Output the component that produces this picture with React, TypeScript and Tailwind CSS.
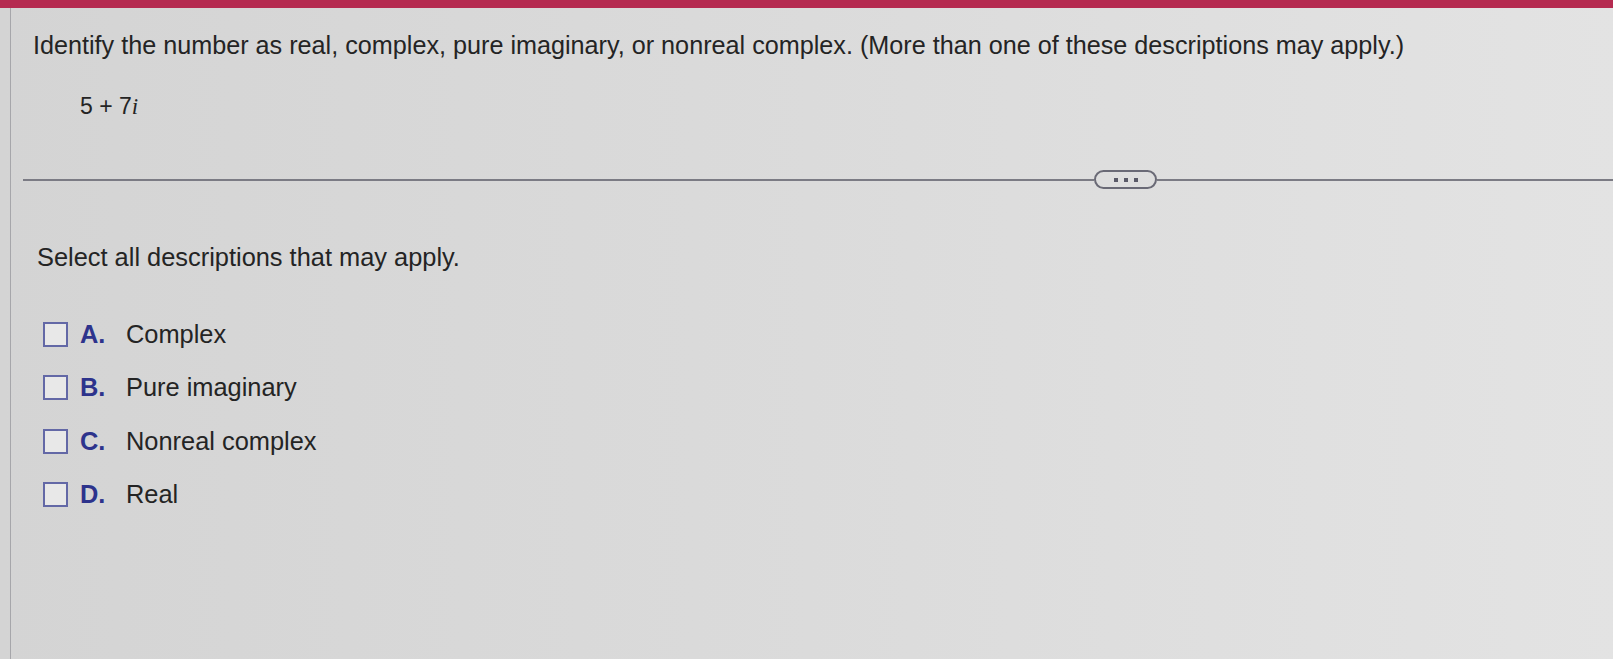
import React, { useState } from "react";

const options = [
  { key: "A", label: "Complex" },
  { key: "B", label: "Pure imaginary" },
  { key: "C", label: "Nonreal complex" },
  { key: "D", label: "Real" },
];

export default function App() {
  const [checked, setChecked] = useState<Record<string, boolean>>({});

  return (
    <div
      className="w-[1613px] h-[659px] overflow-hidden bg-linear-to-r from-[#d4d4d4] via-[#dbdbdb] to-[#e3e3e3] text-[#242424]"
      style={{ fontFamily: '"Liberation Sans", Arial, sans-serif' }}
    >
      <div className="h-[8px] bg-[#b52a50]" />
      <div className="h-[651px] ml-[10px] border-l border-[#a6a6aa]">
        <div className="pl-[22px] pt-[21px]">
          <p className="text-[25.2px] leading-[32px] whitespace-nowrap">
            Identify the number as real, complex, pure imaginary, or nonreal complex. (More than one of
            these descriptions may apply.)
          </p>
          <p className="mt-[31px] ml-[47px] text-[23px] leading-[28px]">
            5 + 7<span style={{ fontFamily: '"Liberation Serif", serif' }} className="italic">i</span>
          </p>
        </div>

        <div className="mt-[49px] ml-[12px] flex items-center">
          <div className="h-[2px] w-[1071px] bg-[#7b7b84]" />
          <button className="h-[19px] w-[63px] rounded-full border-2 border-[#6a6a76] flex items-center justify-center gap-[6px]">
            <span className="w-[4px] h-[4px] bg-[#5a5a68]" />
            <span className="w-[4px] h-[4px] bg-[#5a5a68]" />
            <span className="w-[4px] h-[4px] bg-[#5a5a68]" />
          </button>
          <div className="h-[2px] flex-1 bg-[#7b7b84]" />
        </div>

        <p className="mt-[53px] ml-[26px] text-[25.4px] leading-[30px]">Select all descriptions that may apply.</p>

        <div className="mt-[47px] ml-[32px] flex flex-col gap-[23.5px]">
          {options.map((o) => (
            <label key={o.key} className="flex items-center h-[30px] cursor-pointer">
              <input
                type="checkbox"
                className="sr-only"
                checked={!!checked[o.key]}
                onChange={() => setChecked({ ...checked, [o.key]: !checked[o.key] })}
              />
              <span className="w-[25px] h-[25px] border-2 border-[#6368a6] bg-[#e8e8e8] flex items-center justify-center text-[16px] text-[#2d338c]">
                {checked[o.key] ? "✓" : ""}
              </span>
              <span className="ml-[12px] w-[46px] text-[25.4px] font-bold text-[#2d338c]">{o.key}.</span>
              <span className="text-[25.4px]">{o.label}</span>
            </label>
          ))}
        </div>
      </div>
    </div>
  );
}
